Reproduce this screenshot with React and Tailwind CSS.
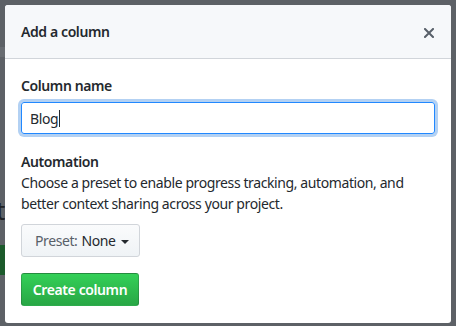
import React from 'react';

const font = { fontFamily: '"Noto Sans", "Liberation Sans", sans-serif' };

function CloseIcon() {
  return (
    <svg width="10" height="10" viewBox="0 0 10 10" className="text-[#586069]">
      <path d="M1 1 L9 9 M9 1 L1 9" stroke="currentColor" strokeWidth="2" strokeLinecap="square" />
    </svg>
  );
}

export default function App() {
  return (
    <div className="flex h-[326px] w-[456px] overflow-hidden bg-[#5d6166] text-[14px] tracking-[-0.4px] text-[#24292e]" style={font}>
      {/* page behind the overlay, only a sliver shows */}
      <div className="flex w-[5px] shrink-0 flex-col overflow-hidden">
        <div className="mt-[47px] h-[10px] w-full bg-[#686c71]" />
        <div className="mt-[140px] flex h-[26px] justify-end">
          <span className="text-[26px] leading-[26px] text-[#1f2225]">t</span>
        </div>
        <div className="mt-[22px] h-[30px] w-full bg-[#1c5a2b]" />
      </div>

      <div className="mt-[5px] flex h-[318px] w-[446px] shrink-0 flex-col overflow-hidden rounded-[3px] bg-white">
        <div className="flex h-[54px] items-center justify-between border-b border-[#d1d5da] bg-[#f6f8fa] pl-4 pr-[17px]">
          <h2 className="text-[14px] font-semibold">Add a column</h2>
          <button className="mt-[3px] flex h-[10px] w-[10px] items-center justify-center">
            <CloseIcon />
          </button>
        </div>

        <div className="flex flex-col px-4 pt-4 leading-[21px]">
          <label className="font-semibold">Column name</label>
          <div className="mt-[6px] flex h-[32px] w-[414px] items-center rounded-[3px] border border-[#2188ff] px-2 shadow-[0_0_0_3px_rgba(3,102,214,0.3)]">
            <span>Blog</span>
            <span className="ml-[1px] h-[17px] w-px bg-[#24292e]" />
          </div>

          <h3 className="mt-[17px] font-semibold">Automation</h3>
          <p className="leading-[21px]">
            Choose a preset to enable progress tracking, automation, and
            <br />
            better context sharing across your project.
          </p>

          <div className="mt-[10px]">
            <button className="flex h-[33px] w-[119px] items-center rounded-[3px] border border-[#d1d5da] bg-gradient-to-b from-[#fafbfc] to-[#eff3f6] pl-[13px] text-[14px]">
              <span className="text-[#586069]">Preset:</span>
              <span className="ml-1 text-[#24292e]">None</span>
              <span className="ml-[5px] mt-[2px] border-x-[4px] border-t-[4px] border-x-transparent border-t-[#24292e]" />
            </button>
          </div>

          <div className="mt-4">
            <button className="flex h-[33px] w-[118px] items-center justify-center rounded-[3px] border border-[rgba(27,31,35,0.2)] bg-gradient-to-b from-[#34d058] to-[#28a745] text-[14px] font-semibold text-white">
              Create column
            </button>
          </div>
        </div>
      </div>
    </div>
  );
}
